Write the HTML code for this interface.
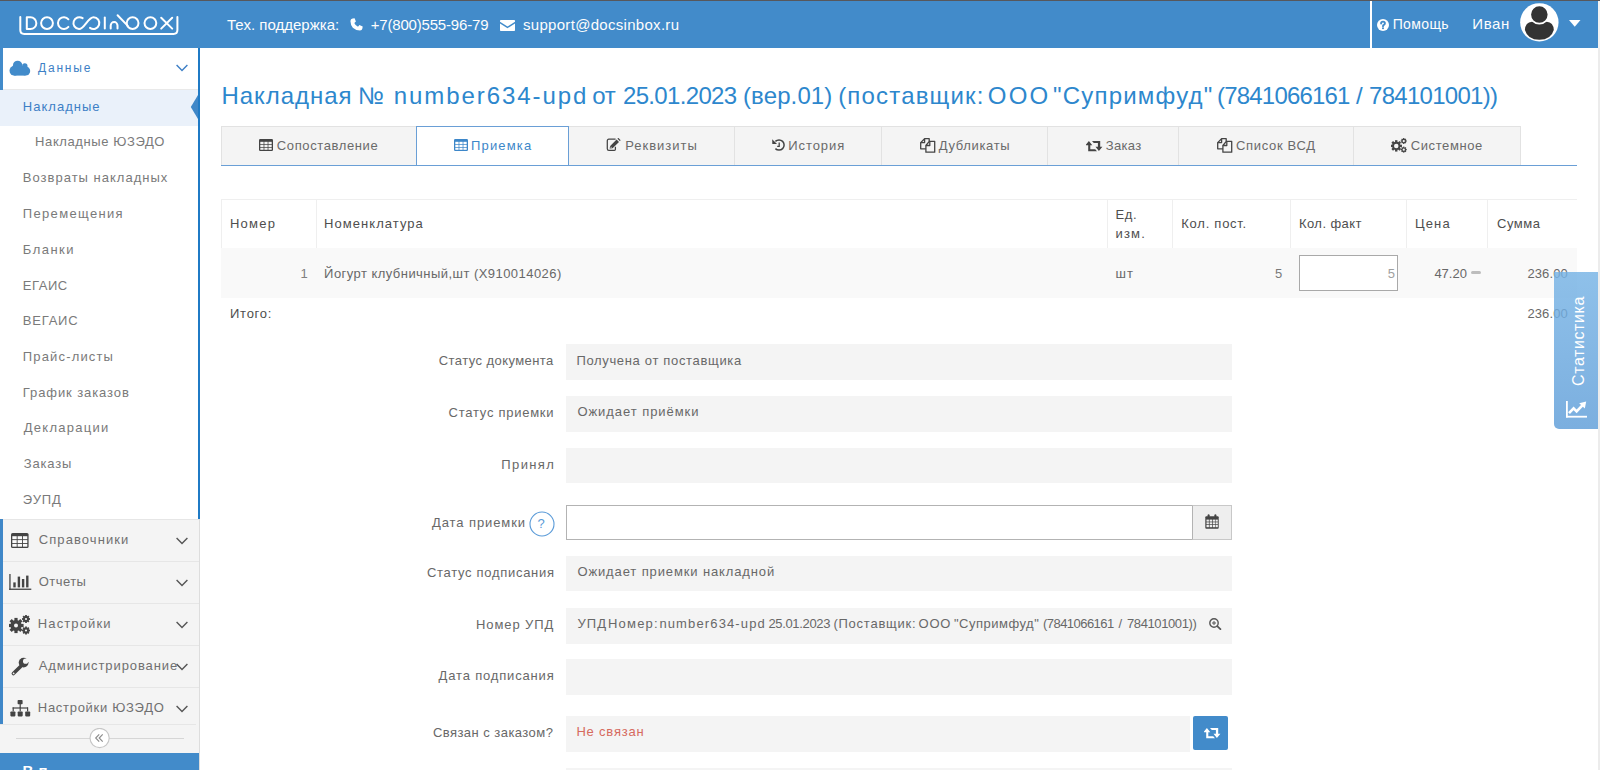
<!DOCTYPE html>
<html><head><meta charset="utf-8"><style>
html,body{margin:0;padding:0;}
body{width:1600px;height:770px;overflow:hidden;position:relative;background:#fff;font-family:"Liberation Sans",sans-serif;}
.t{position:absolute;white-space:nowrap;line-height:0;}
.r{position:absolute;}
</style></head><body>
<div class="r" style="left:0px;top:0px;width:1600px;height:1px;background:#57575b;"></div>
<div class="r" style="left:0px;top:1px;width:1600px;height:47px;background:#428bca;"></div>
<div class="r" style="left:1370px;top:1px;width:2px;height:47px;background:#ffffff;"></div>
<div class="r" style="left:1598px;top:1px;width:2px;height:47px;background:#f2f2f2;"></div>
<svg class="r" style="left:0;top:0" width="200" height="47" viewBox="0 0 200 47">
<g fill="none" stroke="#fff" stroke-width="2" stroke-linecap="round" stroke-linejoin="round">
<path d="M20.3 17 V30 Q20.3 33.9 24.2 33.9 H173.5 Q177.4 33.9 177.4 30 V17"/>
<path d="M26.8 17.2 H30.4 A5.95 5.95 0 0 1 30.4 29.1 H26.8 Z"/>
<circle cx="47" cy="23.1" r="5.9"/>
<path d="M68.4 19.3 A5.9 5.9 0 1 0 68.4 26.9"/>
<path d="M82.6 18.2 A5.9 5.9 0 1 0 79 29 C84.5 29 88 17.2 93.5 17.2 A5.9 5.9 0 1 1 90 27.9"/>
<path d="M104.8 17.6 V28.6"/>
<path d="M110.7 28.6 V25.5 A3.4 3.4 0 0 1 117.5 25.5 V28.6"/>
<path d="M117.6 15.2 L127.6 25.6"/>
<circle cx="132.6" cy="23.1" r="5.9"/>
<circle cx="150.4" cy="23.1" r="5.9"/>
<path d="M161.2 17.8 L172.2 28.6 M172.2 17.8 L161.2 28.6"/>
</g></svg>
<div class="t" style="left:227.00px;top:25.00px;font-size:15px;letter-spacing:0.021px;color:#fdfdfd;">Тех. поддержка:</div>
<div class="t" style="left:370.70px;top:25.00px;font-size:15px;letter-spacing:-0.180px;color:#fdfdfd;">+7(800)555-96-79</div>
<div class="t" style="left:523.00px;top:25.00px;font-size:15px;letter-spacing:0.300px;color:#fdfdfd;">support@docsinbox.ru</div>
<svg class="r" style="left:350px;top:18px" width="13" height="13" viewBox="0 0 13 13"><path fill="#fff" d="M2.6 0.6 L4.6 0.3 L5.9 3.6 L4.3 5 Q5.4 7.6 8 8.7 L9.4 7.1 L12.7 8.4 L12.4 10.4 Q12 12.4 10 12.6 Q5.8 12.4 2.8 9.7 Q0.6 7.2 0.4 3 Q0.6 0.9 2.6 0.6 Z"/></svg>
<svg class="r" style="left:500px;top:19.5px" width="15" height="11" viewBox="0 0 15 11"><path fill="#fff" d="M0 0.8 Q0 0 0.8 0 H14.2 Q15 0 15 0.8 V1.8 L7.5 6.6 L0 1.8 Z M0 3.4 L7.5 8.2 L15 3.4 V10.2 Q15 11 14.2 11 H0.8 Q0 11 0 10.2 Z"/></svg>
<svg class="r" style="left:1376.6px;top:18.8px" width="12" height="12" viewBox="0 0 12 12"><circle cx="6" cy="6" r="6" fill="#fff"/><path fill="none" stroke="#428bca" stroke-width="1.9" stroke-linecap="round" d="M4.1 4.5 Q4.1 2.6 6 2.6 Q7.9 2.6 7.9 4.2 Q7.9 5.3 6.8 5.9 Q6 6.3 6 7.2"/><circle cx="6" cy="9.3" r="1.05" fill="#428bca"/></svg>
<div class="t" style="left:1392.70px;top:24.00px;font-size:14px;letter-spacing:0.360px;color:#fdfdfd;">Помощь</div>
<div class="t" style="left:1472.20px;top:24.00px;font-size:15px;letter-spacing:0.667px;color:#fdfdfd;">Иван</div>
<svg class="r" style="left:1519.5px;top:3.2px" width="39" height="39" viewBox="0 0 39 39"><circle cx="19.35" cy="19.35" r="19.2" fill="#fff"/>
<path fill="#333" d="M4.9 27 Q5.3 19.4 12 18.8 H26.7 Q33.4 19.4 33.8 27 Q31 36.8 19.35 36.8 Q7.7 36.8 4.9 27 Z"/><circle cx="19.35" cy="11.6" r="9.1" fill="#333" stroke="#fff" stroke-width="1.7"/></svg>
<svg class="r" style="left:1569px;top:19.5px" width="12" height="7" viewBox="0 0 12 7"><path fill="#fff" d="M0 0 H11.5 L5.75 6.8 Z"/></svg>
<div class="r" style="left:0px;top:48px;width:198px;height:471px;background:#ffffff;"></div>
<div class="r" style="left:0px;top:48px;width:3px;height:42px;background:#428bca;"></div>
<div class="r" style="left:198px;top:48px;width:1.5px;height:471px;background:#1f7ac5;"></div>
<div class="r" style="left:3px;top:89px;width:195px;height:1px;background:#e9e9e9;"></div>
<div class="r" style="left:0px;top:90px;width:198px;height:36px;background:#eaf1fa;"></div>
<svg class="r" style="left:190px;top:95px" width="8" height="24" viewBox="0 0 8 24"><path fill="#3f87c8" d="M8 0 V24 L0.8 12 Z"/></svg>
<svg class="r" style="left:5px;top:55px" width="30" height="25" viewBox="0 0 30 25"><g fill="#428bca"><circle cx="12.6" cy="10.4" r="4.7"/><circle cx="19.8" cy="10.9" r="2.7"/><circle cx="9.5" cy="15.7" r="5"/><circle cx="20.6" cy="16" r="4.6"/><rect x="9.5" y="11" width="11" height="9.6"/></g></svg>
<div class="t" style="left:38.00px;top:68.00px;font-size:12px;letter-spacing:1.800px;color:#3d7fc6;">Данные</div>
<svg class="r" style="left:175.5px;top:63.8px" width="12" height="8" viewBox="0 0 12 8"><path fill="none" stroke="#3d7fc6" stroke-width="1.4" d="M0.6 1 L6 6.6 L11.4 1"/></svg>
<div class="t" style="left:22.80px;top:107.00px;font-size:13px;letter-spacing:1.025px;color:#3d7fc6;">Накладные</div>
<div class="t" style="left:35.10px;top:142.00px;font-size:13px;letter-spacing:0.593px;color:#7a7a7a;">Накладные ЮЗЭДО</div>
<div class="t" style="left:22.80px;top:178.00px;font-size:13px;letter-spacing:1.006px;color:#7a7a7a;">Возвраты накладных</div>
<div class="t" style="left:22.80px;top:214.00px;font-size:13px;letter-spacing:1.340px;color:#7a7a7a;">Перемещения</div>
<div class="t" style="left:22.80px;top:250.00px;font-size:13px;letter-spacing:1.480px;color:#7a7a7a;">Бланки</div>
<div class="t" style="left:22.80px;top:286.00px;font-size:13px;letter-spacing:0.550px;color:#7a7a7a;">ЕГАИС</div>
<div class="t" style="left:22.80px;top:321.00px;font-size:13px;letter-spacing:0.780px;color:#7a7a7a;">ВЕГАИС</div>
<div class="t" style="left:22.80px;top:357.00px;font-size:13px;letter-spacing:1.160px;color:#7a7a7a;">Прайс-листы</div>
<div class="t" style="left:22.80px;top:393.00px;font-size:13px;letter-spacing:0.908px;color:#7a7a7a;">График заказов</div>
<div class="t" style="left:23.80px;top:428.00px;font-size:13px;letter-spacing:1.267px;color:#7a7a7a;">Декларации</div>
<div class="t" style="left:23.80px;top:464.00px;font-size:13px;letter-spacing:0.800px;color:#7a7a7a;">Заказы</div>
<div class="t" style="left:22.80px;top:500.00px;font-size:13px;letter-spacing:0.733px;color:#7a7a7a;">ЭУПД</div>
<div class="r" style="left:0px;top:519px;width:199px;height:234px;background:#f4f4f4;"></div>
<div class="r" style="left:199px;top:519px;width:1px;height:251px;background:#dddddd;"></div>
<div class="r" style="left:0px;top:519px;width:3px;height:205px;background:#3f87c8;"></div>
<div class="r" style="left:3px;top:519px;width:196px;height:1px;background:#e6e6e6;"></div>
<div class="r" style="left:3px;top:561px;width:196px;height:1px;background:#e6e6e6;"></div>
<div class="r" style="left:3px;top:603px;width:196px;height:1px;background:#e6e6e6;"></div>
<div class="r" style="left:3px;top:645px;width:196px;height:1px;background:#e6e6e6;"></div>
<div class="r" style="left:3px;top:687px;width:196px;height:1px;background:#e6e6e6;"></div>
<div class="r" style="left:0px;top:724px;width:196px;height:1px;background:#e6e6e6;"></div>
<div class="t" style="left:38.80px;top:540.00px;font-size:13px;letter-spacing:1.070px;color:#707070;">Справочники</div>
<div class="t" style="left:38.80px;top:582.00px;font-size:13px;letter-spacing:0.440px;color:#707070;">Отчеты</div>
<div class="t" style="left:37.80px;top:624.00px;font-size:13px;letter-spacing:1.113px;color:#707070;">Настройки</div>
<div class="t" style="left:38.80px;top:666.00px;font-size:13px;letter-spacing:0.900px;color:#707070;">Администрирование</div>
<div class="t" style="left:37.80px;top:708.00px;font-size:13px;letter-spacing:0.707px;color:#707070;">Настройки ЮЗЭДО</div>
<svg class="r" style="left:175.8px;top:536.5px" width="12" height="8" viewBox="0 0 12 8"><path fill="none" stroke="#555" stroke-width="1.4" d="M0.6 1 L6 6.6 L11.4 1"/></svg>
<svg class="r" style="left:175.8px;top:578.5px" width="12" height="8" viewBox="0 0 12 8"><path fill="none" stroke="#555" stroke-width="1.4" d="M0.6 1 L6 6.6 L11.4 1"/></svg>
<svg class="r" style="left:175.8px;top:620.5px" width="12" height="8" viewBox="0 0 12 8"><path fill="none" stroke="#555" stroke-width="1.4" d="M0.6 1 L6 6.6 L11.4 1"/></svg>
<svg class="r" style="left:175.8px;top:662.5px" width="12" height="8" viewBox="0 0 12 8"><path fill="none" stroke="#555" stroke-width="1.4" d="M0.6 1 L6 6.6 L11.4 1"/></svg>
<svg class="r" style="left:175.8px;top:704.5px" width="12" height="8" viewBox="0 0 12 8"><path fill="none" stroke="#555" stroke-width="1.4" d="M0.6 1 L6 6.6 L11.4 1"/></svg>
<svg class="r" style="left:10.8px;top:532.8px" width="18" height="15.2" viewBox="0 0 18 15.2"><rect x="0" y="0" width="17.6" height="15" rx="1.6" fill="#444"/>
<g fill="#fbfbfb"><rect x="1.3" y="3.2" width="4.4" height="3"/><rect x="6.6" y="3.2" width="4.4" height="3"/><rect x="11.9" y="3.2" width="4.4" height="3"/>
<rect x="1.3" y="7.1" width="4.4" height="2.9"/><rect x="6.6" y="7.1" width="4.4" height="2.9"/><rect x="11.9" y="7.1" width="4.4" height="2.9"/>
<rect x="1.3" y="10.9" width="4.4" height="2.8"/><rect x="6.6" y="10.9" width="4.4" height="2.8"/><rect x="11.9" y="10.9" width="4.4" height="2.8"/></g></svg>
<svg class="r" style="left:8.5px;top:574px" width="23" height="17" viewBox="0 0 23 17"><g fill="#444"><rect x="0.3" y="0" width="1.3" height="16"/><rect x="0.3" y="14.6" width="22" height="1.3"/>
<rect x="4.3" y="8.4" width="2.4" height="5"/><rect x="8.7" y="2.6" width="2.4" height="10.8"/><rect x="12.9" y="5" width="2.4" height="8.4"/><rect x="17.1" y="1.6" width="2.4" height="11.8"/></g></svg>
<svg class="r" style="left:9px;top:614.5px" width="22" height="20" viewBox="0 0 22 20"><g fill="#444">
<circle cx="7" cy="10.5" r="5.6"/><g transform="translate(7 10.5)"><rect x="-1.6" y="-7.6" width="3.2" height="15.2"/><rect x="-7.6" y="-1.6" width="15.2" height="3.2"/><rect x="-1.6" y="-7.6" width="3.2" height="15.2" transform="rotate(45)"/><rect x="-1.6" y="-7.6" width="3.2" height="15.2" transform="rotate(-45)"/></g>
<circle cx="17" cy="4" r="3"/><g transform="translate(17 4)"><rect x="-0.9" y="-4" width="1.8" height="8"/><rect x="-4" y="-0.9" width="8" height="1.8"/><rect x="-0.9" y="-4" width="1.8" height="8" transform="rotate(45)"/><rect x="-0.9" y="-4" width="1.8" height="8" transform="rotate(-45)"/></g>
<circle cx="17" cy="15.5" r="3"/><g transform="translate(17 15.5)"><rect x="-0.9" y="-4" width="1.8" height="8"/><rect x="-4" y="-0.9" width="8" height="1.8"/><rect x="-0.9" y="-4" width="1.8" height="8" transform="rotate(45)"/><rect x="-0.9" y="-4" width="1.8" height="8" transform="rotate(-45)"/></g>
</g><circle cx="7" cy="10.5" r="2" fill="#f4f4f4"/><circle cx="17" cy="4" r="1.1" fill="#f4f4f4"/><circle cx="17" cy="15.5" r="1.1" fill="#f4f4f4"/></svg>
<svg class="r" style="left:6px;top:652px" width="28" height="28" viewBox="0 0 28 28"><path stroke="#444" stroke-width="3.6" stroke-linecap="round" d="M7.4 21.6 L14.6 14.4"/><circle cx="17.6" cy="10.6" r="4.9" fill="#444"/>
<circle cx="19.6" cy="9.2" r="2.6" fill="#f4f4f4"/><path fill="#f4f4f4" d="M19.6 9.2 L21.5 4.2 L25 6.5 L24.5 10.5 Z"/><circle cx="7.6" cy="21.4" r="0.9" fill="#f4f4f4"/></svg>
<svg class="r" style="left:9.5px;top:700px" width="21" height="17" viewBox="0 0 21 17"><g fill="#444"><rect x="7.6" y="0" width="5" height="4.2" rx="0.8"/><rect x="9.6" y="4" width="1.2" height="4"/><rect x="2.6" y="7.4" width="15.4" height="1.2"/><rect x="2.6" y="7.4" width="1.2" height="4"/><rect x="17" y="7.4" width="1.2" height="4"/><rect x="9.6" y="7.4" width="1.2" height="4"/>
<rect x="0.4" y="11.4" width="5" height="5" rx="0.8"/><rect x="7.7" y="11.4" width="5" height="5" rx="0.8"/><rect x="15.2" y="11.4" width="5" height="5" rx="0.8"/></g></svg>
<div class="r" style="left:16px;top:738px;width:168px;height:1px;background:#d6d6d6;"></div>
<svg class="r" style="left:89px;top:728px" width="22" height="21" viewBox="0 0 22 21"><circle cx="10.6" cy="10" r="9.6" fill="#fff" stroke="#c6c6c6" stroke-width="1.1"/>
<path fill="none" stroke="#8c8c8c" stroke-width="1.15" d="M10.2 6.4 L6.7 10 L10.2 13.6 M13.7 6.4 L10.2 10 L13.7 13.6"/></svg>
<div class="r" style="left:0px;top:752.5px;width:199px;height:18px;background:#428bca;"></div>
<div class="t" style="left:22.6px;top:771.4px;font-size:15px;font-weight:bold;color:#fff;letter-spacing:5px">Вп</div>
<div class="t" style="left:221.60px;top:96.00px;font-size:24px;letter-spacing:0.925px;color:#2d87cd;">Накладная</div>
<div class="t" style="left:358.00px;top:96.00px;font-size:24px;letter-spacing:4.000px;color:#2d87cd;">№</div>
<div class="t" style="left:393.80px;top:96.00px;font-size:24px;letter-spacing:1.917px;color:#2d87cd;">number634-upd</div>
<div class="t" style="left:592.20px;top:96.00px;font-size:24px;letter-spacing:-0.200px;color:#2d87cd;">от</div>
<div class="t" style="left:623.00px;top:96.00px;font-size:24px;letter-spacing:-0.667px;color:#2d87cd;">25.01.2023</div>
<div class="t" style="left:743.00px;top:96.00px;font-size:24px;letter-spacing:0.114px;color:#2d87cd;">(вер.01)</div>
<div class="t" style="left:838.20px;top:96.00px;font-size:24px;letter-spacing:1.180px;color:#2d87cd;">(поставщик:</div>
<div class="t" style="left:987.80px;top:96.00px;font-size:24px;letter-spacing:2.200px;color:#2d87cd;">ООО</div>
<div class="t" style="left:1053.00px;top:96.00px;font-size:24px;letter-spacing:1.200px;color:#2d87cd;">"Супримфуд"</div>
<div class="t" style="left:1217.00px;top:96.00px;font-size:24px;letter-spacing:-0.800px;color:#2d87cd;">(7841066161</div>
<div class="t" style="left:1356.00px;top:96.00px;font-size:24px;letter-spacing:1.800px;color:#2d87cd;">/</div>
<div class="t" style="left:1369.00px;top:96.00px;font-size:24px;letter-spacing:-0.720px;color:#2d87cd;">784101001))</div>
<div class="r" style="left:221px;top:126px;width:196px;height:39px;background:#f4f4f4;box-sizing:border-box;border:1px solid #e2e2e2;border-bottom:none;"></div>
<div class="r" style="left:568px;top:126px;width:167px;height:39px;background:#f4f4f4;box-sizing:border-box;border:1px solid #e2e2e2;border-bottom:none;"></div>
<div class="r" style="left:734px;top:126px;width:148px;height:39px;background:#f4f4f4;box-sizing:border-box;border:1px solid #e2e2e2;border-bottom:none;"></div>
<div class="r" style="left:881px;top:126px;width:167px;height:39px;background:#f4f4f4;box-sizing:border-box;border:1px solid #e2e2e2;border-bottom:none;"></div>
<div class="r" style="left:1047px;top:126px;width:132px;height:39px;background:#f4f4f4;box-sizing:border-box;border:1px solid #e2e2e2;border-bottom:none;"></div>
<div class="r" style="left:1178px;top:126px;width:176px;height:39px;background:#f4f4f4;box-sizing:border-box;border:1px solid #e2e2e2;border-bottom:none;"></div>
<div class="r" style="left:1353px;top:126px;width:168px;height:39px;background:#f4f4f4;box-sizing:border-box;border:1px solid #e2e2e2;border-bottom:none;"></div>
<div class="r" style="left:416px;top:126px;width:153px;height:39px;background:#fff;box-sizing:border-box;border:1px solid #6a9fd6;border-bottom:none;"></div>
<div class="r" style="left:221px;top:165px;width:1356px;height:1px;background:#6a9fd6;"></div>
<div class="t" style="left:276.80px;top:146.00px;font-size:13px;letter-spacing:0.617px;color:#6a6a6a;">Сопоставление</div>
<div class="t" style="left:471.00px;top:146.00px;font-size:13px;letter-spacing:1.167px;color:#3d87c9;">Приемка</div>
<div class="t" style="left:625.20px;top:146.00px;font-size:13px;letter-spacing:0.987px;color:#6a6a6a;">Реквизиты</div>
<div class="t" style="left:788.30px;top:146.00px;font-size:13px;letter-spacing:0.917px;color:#6a6a6a;">История</div>
<div class="t" style="left:938.80px;top:146.00px;font-size:13px;letter-spacing:0.650px;color:#6a6a6a;">Дубликаты</div>
<div class="t" style="left:1105.80px;top:146.00px;font-size:13px;letter-spacing:0.325px;color:#6a6a6a;">Заказ</div>
<div class="t" style="left:1236.00px;top:146.00px;font-size:13px;letter-spacing:0.667px;color:#6a6a6a;">Список ВСД</div>
<div class="t" style="left:1410.70px;top:146.00px;font-size:13px;letter-spacing:0.600px;color:#6a6a6a;">Системное</div>
<svg class="r" style="left:258.8px;top:139px" width="14" height="12" viewBox="0 0 14 12"><rect x="0" y="0" width="14" height="12" rx="1.2" fill="#444"/>
<g fill="#f4f4f4"><rect x="1.3" y="2.8" width="3.3" height="2.4"/><rect x="5.35" y="2.8" width="3.3" height="2.4"/><rect x="9.4" y="2.8" width="3.3" height="2.4"/>
<rect x="1.3" y="5.9" width="3.3" height="2.2"/><rect x="5.35" y="5.9" width="3.3" height="2.2"/><rect x="9.4" y="5.9" width="3.3" height="2.2"/>
<rect x="1.3" y="8.8" width="3.3" height="2"/><rect x="5.35" y="8.8" width="3.3" height="2"/><rect x="9.4" y="8.8" width="3.3" height="2"/></g></svg>
<svg class="r" style="left:453.8px;top:139px" width="14" height="12" viewBox="0 0 14 12"><rect x="0" y="0" width="14" height="12" rx="1.2" fill="#3d87c9"/>
<g fill="#fff"><rect x="1.3" y="2.8" width="3.3" height="2.4"/><rect x="5.35" y="2.8" width="3.3" height="2.4"/><rect x="9.4" y="2.8" width="3.3" height="2.4"/>
<rect x="1.3" y="5.9" width="3.3" height="2.2"/><rect x="5.35" y="5.9" width="3.3" height="2.2"/><rect x="9.4" y="5.9" width="3.3" height="2.2"/>
<rect x="1.3" y="8.8" width="3.3" height="2"/><rect x="5.35" y="8.8" width="3.3" height="2"/><rect x="9.4" y="8.8" width="3.3" height="2"/></g></svg>
<svg class="r" style="left:606px;top:138px" width="17" height="14" viewBox="0 0 17 14"><path fill="none" stroke="#444" stroke-width="1.25" d="M9.6 1.2 H2.9 Q1.3 1.2 1.3 2.8 V10.8 Q1.3 12.4 2.9 12.4 H8.4 Q9.4 12.4 9.4 11.2 V8.8"/>
<path fill="#444" d="M3.6 10.6 L4.2 7.9 L10.6 1.5 L13.0 3.9 L6.6 10.3 Z M11.4 0.7 L12.3 -0.2 L14.7 2.2 L13.8 3.1 Z"/><path fill="#f4f4f4" d="M4.9 8.6 L4.6 9.9 L5.9 9.6 Z"/></svg>
<svg class="r" style="left:771px;top:138px" width="14" height="14" viewBox="0 0 14 14"><path fill="none" stroke="#444" stroke-width="1.5" d="M4.4 3.4 A5.1 5.1 0 1 1 4.4 10.6"/><path fill="#444" d="M1.2 1.2 L1.3 5.9 L6 5.9 Z"/><path fill="none" stroke="#444" stroke-width="1.3" d="M8.2 4.5 V8.3 H6.2"/></svg>
<svg class="r" style="left:920px;top:138px" width="16" height="15" viewBox="0 0 16 15"><g fill="none" stroke="#444" stroke-width="1.3" stroke-linejoin="round"><path d="M9.2 3.3 V0.7 H4.6 L0.7 4.6 V10.8 H5.9"/><path d="M0.7 4.6 H4.6 V0.7"/><path d="M5.9 7.5 L9.3 3.3 H14.7 V14.2 H5.9 Z"/><path d="M5.9 7.5 H9.8 V3.6"/></g></svg>
<svg class="r" style="left:1217px;top:138px" width="16" height="15" viewBox="0 0 16 15"><g fill="none" stroke="#444" stroke-width="1.3" stroke-linejoin="round"><path d="M9.2 3.3 V0.7 H4.6 L0.7 4.6 V10.8 H5.9"/><path d="M0.7 4.6 H4.6 V0.7"/><path d="M5.9 7.5 L9.3 3.3 H14.7 V14.2 H5.9 Z"/><path d="M5.9 7.5 H9.8 V3.6"/></g></svg>
<svg class="r" style="left:1086px;top:140.5px" width="17" height="11" viewBox="0 0 17 11"><path fill="#444" d="M2.9 0 L6.3 4.2 H4.3 V8.3 H9.2 L11 10.2 H2.2 V4.2 H-0.5 Z M6 0.1 H14.2 V5.8 H16.4 L12.9 10.1 L9.5 5.8 H11.9 V2 H7.8 Z"/></svg>
<svg class="r" style="left:1391.2px;top:137.8px" width="16.5" height="15.0" viewBox="0 0 22 20"><g fill="#444">
<circle cx="7" cy="10.5" r="5.6"/><g transform="translate(7 10.5)"><rect x="-1.6" y="-7.6" width="3.2" height="15.2"/><rect x="-7.6" y="-1.6" width="15.2" height="3.2"/><rect x="-1.6" y="-7.6" width="3.2" height="15.2" transform="rotate(45)"/><rect x="-1.6" y="-7.6" width="3.2" height="15.2" transform="rotate(-45)"/></g>
<circle cx="17" cy="4" r="3"/><g transform="translate(17 4)"><rect x="-0.9" y="-4" width="1.8" height="8"/><rect x="-4" y="-0.9" width="8" height="1.8"/><rect x="-0.9" y="-4" width="1.8" height="8" transform="rotate(45)"/><rect x="-0.9" y="-4" width="1.8" height="8" transform="rotate(-45)"/></g>
<circle cx="17" cy="15.5" r="3"/><g transform="translate(17 15.5)"><rect x="-0.9" y="-4" width="1.8" height="8"/><rect x="-4" y="-0.9" width="8" height="1.8"/><rect x="-0.9" y="-4" width="1.8" height="8" transform="rotate(45)"/><rect x="-0.9" y="-4" width="1.8" height="8" transform="rotate(-45)"/></g>
</g><circle cx="7" cy="10.5" r="3" fill="#f4f4f4"/><circle cx="17" cy="4" r="1.5" fill="#f4f4f4"/><circle cx="17" cy="15.5" r="1.5" fill="#f4f4f4"/></svg>
<div class="r" style="left:221px;top:199px;width:1356px;height:49px;background:#fff;box-sizing:border-box;border-top:1px solid #efefef;border-left:1px solid #efefef;"></div>
<div class="r" style="left:316px;top:199px;width:1px;height:49px;background:#efefef;"></div>
<div class="r" style="left:1107px;top:199px;width:1px;height:49px;background:#efefef;"></div>
<div class="r" style="left:1172px;top:199px;width:1px;height:49px;background:#efefef;"></div>
<div class="r" style="left:1290px;top:199px;width:1px;height:49px;background:#efefef;"></div>
<div class="r" style="left:1406px;top:199px;width:1px;height:49px;background:#efefef;"></div>
<div class="r" style="left:1487px;top:199px;width:1px;height:49px;background:#efefef;"></div>
<div class="r" style="left:221px;top:248px;width:1356px;height:50px;background:#f9f9f9;"></div>
<div class="t" style="left:230.00px;top:224.00px;font-size:13px;letter-spacing:1.225px;color:#4e4e4e;">Номер</div>
<div class="t" style="left:324.10px;top:224.00px;font-size:13px;letter-spacing:1.045px;color:#4e4e4e;">Номенклатура</div>
<div class="t" style="left:1115.50px;top:215.00px;font-size:13px;letter-spacing:0.600px;color:#4e4e4e;">Ед.</div>
<div class="t" style="left:1115.50px;top:234.00px;font-size:13px;letter-spacing:1.200px;color:#4e4e4e;">изм.</div>
<div class="t" style="left:1181.30px;top:224.00px;font-size:13px;letter-spacing:0.744px;color:#4e4e4e;">Кол. пост.</div>
<div class="t" style="left:1299.00px;top:224.00px;font-size:13px;letter-spacing:0.425px;color:#4e4e4e;">Кол. факт</div>
<div class="t" style="left:1415.00px;top:224.00px;font-size:13px;letter-spacing:1.133px;color:#4e4e4e;">Цена</div>
<div class="t" style="left:1497.00px;top:224.00px;font-size:13px;letter-spacing:0.550px;color:#4e4e4e;">Сумма</div>
<div class="t" style="left:300.50px;top:274.00px;font-size:13px;letter-spacing:0.000px;color:#808080;">1</div>
<div class="t" style="left:1274.90px;top:274.00px;font-size:13px;letter-spacing:0.000px;color:#7a7a7a;">5</div>
<div class="t" style="left:324.10px;top:274.00px;font-size:13px;letter-spacing:0.453px;color:#686868;">Йогурт клубничный,шт (X910014026)</div>
<div class="t" style="left:1115.50px;top:274.00px;font-size:13px;letter-spacing:1.000px;color:#686868;">шт</div>
<div class="r" style="left:1299px;top:255px;width:99px;height:36px;background:#fff;box-sizing:border-box;border:1px solid #a9a9a9;"></div>
<div class="t" style="left:1387.80px;top:274.00px;font-size:13px;letter-spacing:0.000px;color:#a0a0a0;">5</div>
<div class="t" style="left:1434.40px;top:274.00px;font-size:13px;letter-spacing:0.000px;color:#686868;">47.20</div>
<div class="r" style="left:1470.5px;top:270.5px;width:10.5px;height:3px;background:#bdbdbd;border-radius:1.5px;"></div>
<div class="t" style="left:1527.40px;top:274.00px;font-size:13px;letter-spacing:0.120px;color:#686868;">236.00</div>
<div class="t" style="left:230.00px;top:314.00px;font-size:13px;letter-spacing:0.740px;color:#4e4e4e;">Итого:</div>
<div class="t" style="left:1527.40px;top:314.00px;font-size:13px;letter-spacing:0.120px;color:#686868;">236.00</div>
<div class="r" style="left:566px;top:344px;width:666px;height:36px;background:#f4f4f4;"></div>
<div class="r" style="left:566px;top:396px;width:666px;height:36px;background:#f4f4f4;"></div>
<div class="r" style="left:566px;top:448px;width:666px;height:35px;background:#f4f4f4;"></div>
<div class="r" style="left:566px;top:556px;width:666px;height:35px;background:#f4f4f4;"></div>
<div class="r" style="left:566px;top:608px;width:666px;height:36px;background:#f4f4f4;"></div>
<div class="r" style="left:566px;top:659px;width:666px;height:36px;background:#f4f4f4;"></div>
<div class="r" style="left:566px;top:768px;width:666px;height:10px;background:#f4f4f4;"></div>
<div class="r" style="left:566px;top:716px;width:624px;height:36px;background:#f4f4f4;"></div>
<div class="r" style="left:566px;top:505px;width:627px;height:35px;background:#fff;box-sizing:border-box;border:1px solid #b3b3b3;"></div>
<div class="r" style="left:1192px;top:505px;width:40px;height:35px;background:#eee;box-sizing:border-box;border:1px solid #c8c8c8;border-left:1px solid #b3b3b3;"></div>
<div class="r" style="left:1193px;top:716px;width:35px;height:34px;background:#428bca;border-radius:2px;"></div>
<div class="t" style="left:438.80px;top:361.00px;font-size:13px;letter-spacing:0.427px;color:#686868;">Статус документа</div>
<div class="t" style="left:448.60px;top:413.00px;font-size:13px;letter-spacing:0.738px;color:#686868;">Статус приемки</div>
<div class="t" style="left:501.30px;top:465.00px;font-size:13px;letter-spacing:1.380px;color:#686868;">Принял</div>
<div class="t" style="left:427.00px;top:573.00px;font-size:13px;letter-spacing:0.700px;color:#686868;">Статус подписания</div>
<div class="t" style="left:476.00px;top:625.00px;font-size:13px;letter-spacing:0.900px;color:#686868;">Номер УПД</div>
<div class="t" style="left:438.60px;top:676.00px;font-size:13px;letter-spacing:0.829px;color:#686868;">Дата подписания</div>
<div class="t" style="left:432.90px;top:733.00px;font-size:13px;letter-spacing:0.456px;color:#686868;">Связан с заказом?</div>
<div class="t" style="left:432.00px;top:523.00px;font-size:13px;letter-spacing:0.909px;color:#686868;">Дата приемки</div>
<svg class="r" style="left:528.5px;top:510.5px" width="26" height="26" viewBox="0 0 26 26"><circle cx="13" cy="13" r="12" fill="#fff" stroke="#5b9bd8" stroke-width="1.1"/></svg>
<div class="t" style="left:537.50px;top:524.00px;font-size:13px;letter-spacing:0.000px;color:#5b9bd8;">?</div>
<div class="t" style="left:577.60px;top:624.00px;font-size:13px;letter-spacing:1.000px;color:#686868;">УПД</div>
<div class="t" style="left:608.00px;top:624.00px;font-size:13px;letter-spacing:1.200px;color:#686868;">Номер:</div>
<div class="t" style="left:659.40px;top:624.00px;font-size:13px;letter-spacing:1.133px;color:#686868;">number634-upd</div>
<div class="t" style="left:768.40px;top:624.00px;font-size:13px;letter-spacing:-0.333px;color:#686868;">25.01.2023</div>
<div class="t" style="left:833.40px;top:624.00px;font-size:13px;letter-spacing:0.760px;color:#686868;">(Поставщик:</div>
<div class="t" style="left:918.60px;top:624.00px;font-size:13px;letter-spacing:0.700px;color:#686868;">ООО</div>
<div class="t" style="left:954.00px;top:624.00px;font-size:13px;letter-spacing:0.500px;color:#686868;">"Супримфуд"</div>
<div class="t" style="left:1043.00px;top:624.00px;font-size:13px;letter-spacing:-0.540px;color:#686868;">(7841066161</div>
<div class="t" style="left:1118.60px;top:624.00px;font-size:13px;letter-spacing:0.000px;color:#686868;">/</div>
<div class="t" style="left:1127.00px;top:624.00px;font-size:13px;letter-spacing:-0.400px;color:#686868;">784101001))</div>
<div class="t" style="left:576.40px;top:361.00px;font-size:13px;letter-spacing:0.667px;color:#686868;">Получена от поставщика</div>
<div class="t" style="left:577.40px;top:412.00px;font-size:13px;letter-spacing:0.943px;color:#686868;">Ожидает приёмки</div>
<div class="t" style="left:577.40px;top:572.00px;font-size:13px;letter-spacing:0.875px;color:#686868;">Ожидает приемки накладной</div>
<div class="t" style="left:576.40px;top:732.00px;font-size:13px;letter-spacing:0.812px;color:#d66a5e;">Не связан</div>
<svg class="r" style="left:1208.5px;top:617.5px" width="13" height="12" viewBox="0 0 13 12"><circle cx="5" cy="5" r="4.2" fill="none" stroke="#555" stroke-width="1.4"/><path stroke="#555" stroke-width="1.8" stroke-linecap="round" d="M8.2 8.2 L11.4 11.2"/><path stroke="#555" stroke-width="1" d="M5 3 V7 M3 5 H7"/></svg>
<svg class="r" style="left:1205px;top:514px" width="14" height="15" viewBox="0 0 14 15"><rect x="0.3" y="2.2" width="13.4" height="12.6" rx="1" fill="#444"/>
<g fill="#eee"><rect x="1.5" y="5.6" width="2.4" height="2"/><rect x="4.6" y="5.6" width="2.4" height="2"/><rect x="7.7" y="5.6" width="2.4" height="2"/><rect x="10.6" y="5.6" width="2.2" height="2"/>
<rect x="1.5" y="8.3" width="2.4" height="2"/><rect x="4.6" y="8.3" width="2.4" height="2"/><rect x="7.7" y="8.3" width="2.4" height="2"/><rect x="10.6" y="8.3" width="2.2" height="2"/>
<rect x="1.5" y="11" width="2.4" height="2.2"/><rect x="4.6" y="11" width="2.4" height="2.2"/><rect x="7.7" y="11" width="2.4" height="2.2"/><rect x="10.6" y="11" width="2.2" height="2.2"/></g>
<rect x="2.6" y="0.2" width="2" height="3.6" rx="1" fill="#444"/><rect x="9.4" y="0.2" width="2" height="3.6" rx="1" fill="#444"/></svg>
<svg class="r" style="left:1203.5px;top:727.5px" width="17" height="11" viewBox="0 0 17 11"><path fill="#fff" d="M2.9 0 L6.3 4.2 H4.3 V8.3 H9.2 L11 10.2 H2.2 V4.2 H-0.5 Z M6 0.1 H14.2 V5.8 H16.4 L12.9 10.1 L9.5 5.8 H11.9 V2 H7.8 Z"/></svg>
<div class="r" style="left:1598px;top:48px;width:2px;height:722px;background:#ececec;"></div>
<div class="r" style="left:1554px;top:271.5px;width:44px;height:157px;background:linear-gradient(#76b3e5,#5e9dd8);opacity:0.82;border-radius:0 0 0 5px;"></div>
<div class="t" style="left:1579.1px;top:340.9px;font-size:16px;color:#fff;line-height:16px;transform:translate(-50%,-50%) rotate(-90deg);letter-spacing:0.58px;">Статистика</div>
<svg class="r" style="left:1566px;top:401px" width="22" height="17" viewBox="0 0 22 17"><g fill="#fff"><rect x="0" y="0" width="1.8" height="16.5"/><rect x="0" y="14.8" width="21" height="1.8"/></g>
<path fill="none" stroke="#fff" stroke-width="2.6" stroke-linejoin="miter" d="M3 12.2 L7.6 7.4 L10.6 10.4 L16.4 4.4"/><path fill="#fff" d="M13.2 2.2 L20.2 0.6 L18.8 7.6 Z"/></svg>

</body></html>
